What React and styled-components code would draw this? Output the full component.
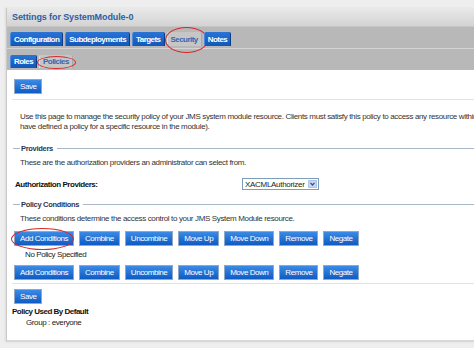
import React from "react";
import styled, { createGlobalStyle } from "styled-components";

const GlobalStyle = createGlobalStyle`
  html, body {
    margin: 0;
    padding: 0;
    background: #eeeeee;
    font-family: "Liberation Sans", Arial, sans-serif;
  }
`;

const Page = styled.div`
  height: 348px;
  padding: 8px 0 0 6px;
  box-sizing: border-box;
  overflow: hidden;
`;

const Panel = styled.div`
  height: 334px;
  background: #ffffff;
  border-left: 1px solid #c9c9c9;
  border-bottom: 2px solid #d8d8d8;
  box-sizing: border-box;
  box-shadow: -1px 0 2px rgba(0, 0, 0, 0.08);
  overflow: hidden;
`;

const TitleBar = styled.div`
  height: 18px;
  display: flex;
  align-items: center;
  padding-left: 5px;
  background: linear-gradient(#e9e9e9, #d3d3d3);
  color: #2d5fa5;
  font-size: 9px;
  font-weight: bold;
  letter-spacing: -0.1px;
`;

const TabBar = styled.div`
  height: 22px;
  display: flex;
  align-items: flex-end;
  gap: 2px;
  padding: 0 0 2px 3px;
  box-sizing: border-box;
  background: #b8b8b8;
  border-top: 1px solid ${(p) => (p.$sub ? "#d4d4d4" : "#c6c6c6")};
`;

const Tab = styled.div`
  position: relative;
  height: ${(p) => (p.$sub ? 13 : 14)}px;
  display: flex;
  align-items: center;
  padding: 0 3px;
  font-size: 8px;
  font-weight: bold;
  letter-spacing: -0.55px;
  color: ${(p) => (p.$active ? "#3467b3" : "#ffffff")};
  background: ${(p) =>
    p.$active ? "#c6c6c6" : "linear-gradient(#2a74d6, #1257b8)"};
  border-right: 1px solid ${(p) => (p.$active ? "#a8a8a8" : "#0b3d86")};
  border-left: 1px solid ${(p) => (p.$active ? "#e0e0e0" : "#4a8be0")};
  border-radius: 2px 2px 0 0;
`;

const Ring = styled.span`
  position: absolute;
  left: ${(p) => p.$l}px;
  right: ${(p) => p.$r}px;
  top: ${(p) => p.$t}px;
  bottom: ${(p) => p.$b}px;
  border: 1.5px solid #d4282b;
  border-radius: 50%;
  pointer-events: none;
`;

const Content = styled.div`
  padding: 9px 0 0 6px;
`;

const Button = styled.div`
  position: relative;
  width: fit-content;
  height: 15px;
  display: flex;
  align-items: center;
  padding: 0 5px;
  margin: ${(p) => p.$m || "0"};
  box-sizing: border-box;
  background: linear-gradient(#3b8ae6, #0e5cc4);
  border: 1px solid #8fa8c8;
  color: #ffffff;
  font-size: 8px;
  letter-spacing: -0.45px;
  white-space: nowrap;
`;

const Rule = styled.div`
  height: 1px;
  background: #e2e2e2;
  margin: ${(p) => p.$m || "0"};
`;

const Para = styled.p`
  margin: ${(p) => p.$m || "0"};
  padding-left: 7px;
  font-size: 8px;
  line-height: 10px;
  letter-spacing: -0.35px;
  color: #333333;
  white-space: nowrap;
`;

const Legend = styled.div`
  display: flex;
  align-items: center;
  gap: 1px;
  height: 10px;
  margin: ${(p) => p.$m || "0"};
  font-size: 7.5px;
  font-weight: bold;
  letter-spacing: -0.3px;
  color: #2a3550;

  &::before {
    content: "";
    width: 7px;
    height: 1px;
    background: #a9b7c6;
  }
  &::after {
    content: "";
    flex: 1;
    height: 1px;
    margin-left: 3px;
    background: #a9b7c6;
  }
`;

const FieldRow = styled.div`
  display: flex;
  align-items: center;
  margin: 9px 0 0 2px;
  height: 14px;
`;

const Label = styled.div`
  width: 227px;
  font-size: 8px;
  font-weight: bold;
  letter-spacing: -0.45px;
  color: #111111;
`;

const Select = styled.div`
  display: flex;
  align-items: center;
  gap: 3px;
  height: 12px;
  padding: 0 1px 0 2px;
  box-sizing: border-box;
  border: 1px solid #7f9db9;
  font-size: 8px;
  letter-spacing: -0.3px;
  color: #222222;
`;

const Arrow = styled.span`
  width: 9px;
  height: 8px;
  display: flex;
  align-items: center;
  justify-content: center;
  background: #c6d6f2;
  border: 1px solid #b3c5e6;
  box-sizing: border-box;
`;

const ButtonRow = styled.div`
  display: flex;
  gap: 5px;
  margin: ${(p) => p.$m || "0"};
  padding-left: 1px;
`;

const Note = styled.div`
  margin: ${(p) => p.$m || "0"};
  font-size: 8px;
  line-height: 10px;
  letter-spacing: -0.4px;
  color: #222222;
`;

const Heading = styled.div`
  margin: 3px 0 0 -1px;
  font-size: 8px;
  line-height: 10px;
  font-weight: bold;
  letter-spacing: -0.5px;
  color: #111111;
`;

const actions = [
  "Add Conditions",
  "Combine",
  "Uncombine",
  "Move Up",
  "Move Down",
  "Remove",
  "Negate",
];

const Actions = ({ ring, m }) => (
  <ButtonRow $m={m}>
    {actions.map((a, i) => (
      <Button key={a}>
        {a}
        {ring && i === 0 && <Ring $l={-4} $r={-1} $t={-4} $b={-5} />}
      </Button>
    ))}
  </ButtonRow>
);

export default function App() {
  return (
    <>
      <GlobalStyle />
      <Page>
        <Panel>
          <TitleBar>Settings for SystemModule-0</TitleBar>
          <TabBar>
            <Tab>Configuration</Tab>
            <Tab>Subdeployments</Tab>
            <Tab>Targets</Tab>
            <Tab $active>
              Security
              <Ring $l={-3} $r={-7} $t={-5} $b={-7} />
            </Tab>
            <Tab>Notes</Tab>
          </TabBar>
          <TabBar $sub>
            <Tab $sub>Roles</Tab>
            <Tab $sub $active>
              Policies
              <Ring $l={-3} $r={-4} $t={1} $b={-1} />
            </Tab>
          </TabBar>
          <Content>
            <Button $m="0 0 0 1px">Save</Button>
            <Rule $m="5px 0 0 -1px" />
            <Para $m="12px 0 0 0">
              Use this page to manage the security policy of your JMS system
              module resource. Clients must satisfy this policy to access any
              resource within the module (unless you
            </Para>
            <Para>
              have defined a policy for a specific resource in the module).
            </Para>
            <Legend $m="11px 0 0 0">Providers</Legend>
            <Para $m="5px 0 0 0">
              These are the authorization providers an administrator can
              select from.
            </Para>
            <FieldRow>
              <Label>Authorization Providers:</Label>
              <Select>
                XACMLAuthorizer
                <Arrow>
                  <svg width="5" height="4" viewBox="0 0 5 4">
                    <path d="M0.5 0.8 L2.5 3 L4.5 0.8" fill="none" stroke="#2a4f9a" strokeWidth="1.2" />
                  </svg>
                </Arrow>
              </Select>
            </FieldRow>
            <Legend $m="8px 0 0 0">Policy Conditions</Legend>
            <Para $m="5px 0 0 0">
              These conditions determine the access control to your JMS System
              Module resource.
            </Para>
            <Actions ring m="7px 0 0 0" />
            <Note $m="4px 0 0 12px">No Policy Specified</Note>
            <Actions m="5px 0 0 0" />
            <Rule $m="3px 0 0 -1px" />
            <Button $m="5px 0 0 1px">Save</Button>
            <Heading>Policy Used By Default</Heading>
            <Note $m="1px 0 0 13px">Group : everyone</Note>
          </Content>
        </Panel>
      </Page>
    </>
  );
}
